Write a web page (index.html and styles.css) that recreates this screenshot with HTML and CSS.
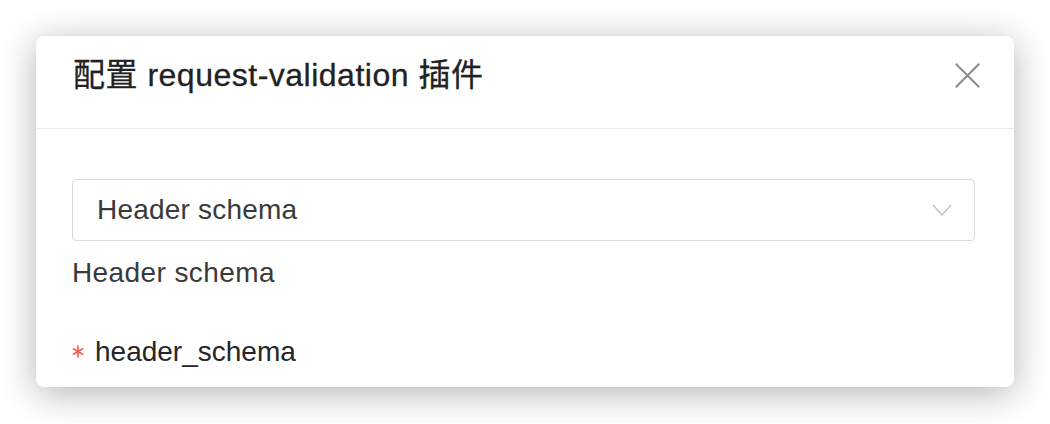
FILE: index.html
```html
<!DOCTYPE html>
<html lang="zh">
<head>
<meta charset="utf-8">
<title>配置 request-validation 插件</title>
<link rel="stylesheet" href="styles.css">
</head>
<body>
  <div class="modal">
    <div class="modal-header">
      <div class="modal-title">配置 request-validation 插件</div>
      <button class="modal-close" aria-label="Close">
        <svg width="25" height="25" viewBox="0 0 25 25"><path d="M1.5 1.5 L23.5 23.5 M23.5 1.5 L1.5 23.5" stroke="#8c8c8c" stroke-width="2" fill="none" stroke-linecap="square"/></svg>
      </button>
    </div>
    <div class="modal-body">
      <div class="select">
        <span class="select-value">Header schema</span>
        <svg class="select-arrow" width="20" height="12" viewBox="0 0 20 12"><polyline points="1,1 10,11 19,1" stroke="#c4c4c4" stroke-width="1.5" fill="none"/></svg>
      </div>
      <div class="desc">Header schema</div>
      <div class="form-label">
        <svg class="required" width="12" height="13" viewBox="0 0 12 13"><path d="M6 0.5 V12.5 M0.8 3.5 L11.2 9.5 M11.2 3.5 L0.8 9.5" stroke="#ff5a5c" stroke-width="1.7" fill="none"/></svg>
        <span>header_schema</span>
      </div>
    </div>
  </div>
</body>
</html>
```

FILE: styles.css
```css
html, body {
  margin: 0;
  padding: 0;
  background: #ffffff;
}

body {
  padding: 36px;
  font-family: "Liberation Sans", "Noto Sans CJK SC", Arial, sans-serif;
}

.modal {
  width: 978px;
  height: 351px;
  background: #fff;
  border-radius: 8px;
  overflow: hidden;
  box-shadow: 0 6px 36px rgba(0, 0, 0, 0.3);
  box-sizing: border-box;
}

.modal-header {
  box-sizing: border-box;
  height: 93px;
  padding: 17px 34px 0 37px;
  border-bottom: 1px solid #ebebeb;
  display: flex;
  align-items: flex-start;
  justify-content: space-between;
}

.modal-title {
  font-size: 32px;
  line-height: 44px;
  letter-spacing: 0.5px;
  color: #222222;
  -webkit-text-stroke: 0.3px #222222;
}

.modal-close {
  border: 0;
  background: none;
  padding: 0;
  margin-top: 10px;
  width: 25px;
  height: 25px;
  display: flex;
  cursor: pointer;
}

.modal-body {
  padding: 50px 39px 0 36px;
}

.select {
  box-sizing: border-box;
  height: 62px;
  border: 1px solid #d9d9d9;
  border-radius: 4px;
  padding: 0 22px 0 24px;
  display: flex;
  align-items: center;
  justify-content: space-between;
}

.select-value {
  font-size: 28px;
  color: #3a3a3a;
  line-height: 44px;
  letter-spacing: 0.2px;
}

.desc {
  margin-top: 10px;
  font-size: 28px;
  line-height: 44px;
  color: #3a3a3a;
  letter-spacing: 0.4px;
}

.form-label {
  margin-top: 35px;
  font-size: 28px;
  line-height: 44px;
  color: #262626;
  display: flex;
  align-items: center;
}

.required {
  margin-left: 0;
  margin-right: 11px;
  margin-top: -2px;
}
```
